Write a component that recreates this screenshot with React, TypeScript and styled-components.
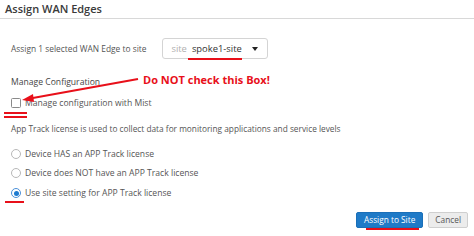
import React from "react";
import styled, { createGlobalStyle } from "styled-components";

const Global = createGlobalStyle`
  html, body { margin: 0; padding: 0; background: #fff; }
  body { font-family: "Open Sans", "Noto Sans", sans-serif; color: #444; width: 474px; height: 236px; overflow: hidden; }
  * { box-sizing: border-box; }
`;

const Dialog = styled.div`
  position: relative;
  width: 474px;
  height: 236px;
  display: flex;
  flex-direction: column;
`;

const Header = styled.div`
  height: 19px;
  padding: 1px 5px 0;
  border-bottom: 1px solid #d8d8d8;
  font-size: 11px;
  font-weight: 600;
  color: #3a3a3a;
  line-height: 16px;
`;

const Body = styled.div`
  padding: 19px 11px 0;
  display: flex;
  flex-direction: column;
  flex: 1;
`;

const SiteRow = styled.div`
  display: flex;
  align-items: center;
  gap: 16px;
  height: 21px;
  font-size: 8.4px;
  color: #555;
`;

const Select = styled.div`
  position: relative;
  width: 106px;
  height: 21px;
  border: 1px solid #d4d4d4;
  border-radius: 3px;
  display: flex;
  align-items: center;
  padding-left: 8px;
  font-size: 9.4px;
  gap: 5px;
`;

const Placeholder = styled.span`
  color: #b0b0b0;
`;

const Value = styled.span`
  color: #333;
`;

const Caret = styled.span`
  position: absolute;
  right: 9px;
  top: 8px;
  width: 0;
  height: 0;
  border-left: 3.5px solid transparent;
  border-right: 3.5px solid transparent;
  border-top: 4px solid #222;
`;

const SectionTitle = styled.div`
  margin-top: 15px;
  font-size: 8.6px;
  color: #444;
  line-height: 16px;
`;

const OptionRow = styled.label<{ $mt: number }>`
  display: flex;
  align-items: center;
  gap: 4px;
  margin-top: ${(p) => p.$mt}px;
  font-size: 8.6px;
  color: #555;
  line-height: 14px;
`;

const Checkbox = styled.span`
  width: 10px;
  height: 10px;
  border: 1px solid #8a8a8a;
  border-radius: 1.5px;
  background: #fff;
`;

const Radio = styled.span<{ $checked?: boolean }>`
  width: 10px;
  height: 10px;
  border-radius: 50%;
  border: 1px solid ${(p) => (p.$checked ? "#4a90d9" : "#b8b8b8")};
  background: #fff;
  display: flex;
  align-items: center;
  justify-content: center;
  &::after {
    content: "";
    display: ${(p) => (p.$checked ? "block" : "none")};
    width: 5px;
    height: 5px;
    border-radius: 50%;
    background: #1e7bd0;
  }
`;

const Note = styled.div`
  margin-top: 12px;
  font-size: 8.3px;
  color: #555;
  line-height: 14px;
`;

const Footer = styled.div`
  margin-top: auto;
  margin-right: -5px;
  display: flex;
  justify-content: flex-end;
  gap: 5px;
  padding-bottom: 8px;
`;

const Button = styled.button<{ $primary?: boolean }>`
  height: 16px;
  padding: 0 ${(p) => (p.$primary ? 7 : 6)}px;
  font-family: "Open Sans", sans-serif;
  font-size: 8.3px;
  border-radius: 2px;
  border: 1px solid ${(p) => (p.$primary ? "#1a6fb8" : "#cfcfcf")};
  background: ${(p) => (p.$primary ? "#1f7ac7" : "#ececec")};
  color: ${(p) => (p.$primary ? "#fff" : "#555")};
  line-height: 14px;
`;

const Annotation = styled.div`
  position: absolute;
  left: 143px;
  top: 72px;
  font-size: 11px;
  font-weight: 700;
  color: #e8101a;
  line-height: 16px;
  white-space: nowrap;
`;

const Mark = styled.div<{ $x: number; $y: number; $w: number }>`
  position: absolute;
  left: ${(p) => p.$x}px;
  top: ${(p) => p.$y}px;
  width: ${(p) => p.$w}px;
  height: 2px;
  background: #e8101a;
`;

const ArrowSvg = styled.svg`
  position: absolute;
  left: 0;
  top: 0;
  pointer-events: none;
`;

export default function App() {
  return (
    <Dialog>
      <Global />
      <Header>Assign WAN Edges</Header>
      <Body>
        <SiteRow>
          <span>Assign 1 selected WAN Edge to site</span>
          <Select>
            <Placeholder>site</Placeholder>
            <Value>spoke1-site</Value>
            <Caret />
          </Select>
        </SiteRow>
        <SectionTitle>Manage Configuration</SectionTitle>
        <OptionRow $mt={6}>
          <Checkbox />
          <span>Manage configuration with Mist</span>
        </OptionRow>
        <Note>App Track license is used to collect data for monitoring applications and service levels</Note>
        <OptionRow $mt={11}>
          <Radio />
          <span>Device HAS an APP Track license</span>
        </OptionRow>
        <OptionRow $mt={5}>
          <Radio />
          <span>Device does NOT have an APP Track license</span>
        </OptionRow>
        <OptionRow $mt={6}>
          <Radio $checked />
          <span>Use site setting for APP Track license</span>
        </OptionRow>
        <Footer>
          <Button $primary>Assign to Site</Button>
          <Button>Cancel</Button>
        </Footer>
      </Body>
      <Annotation>Do NOT check this Box!</Annotation>
      <ArrowSvg width="474" height="236">
        <line x1="138" y1="79" x2="30" y2="98.5" stroke="#e8101a" strokeWidth="2" />
        <polygon points="22,100 33,94 34,102" fill="#e8101a" />
      </ArrowSvg>
      <Mark $x={188} $y={58} $w={54} />
      <Mark $x={4} $y={112} $w={23} />
      <Mark $x={4} $y={116} $w={23} />
      <Mark $x={5} $y={201} $w={19} />
      <Mark $x={366} $y={228} $w={53} />
    </Dialog>
  );
}
